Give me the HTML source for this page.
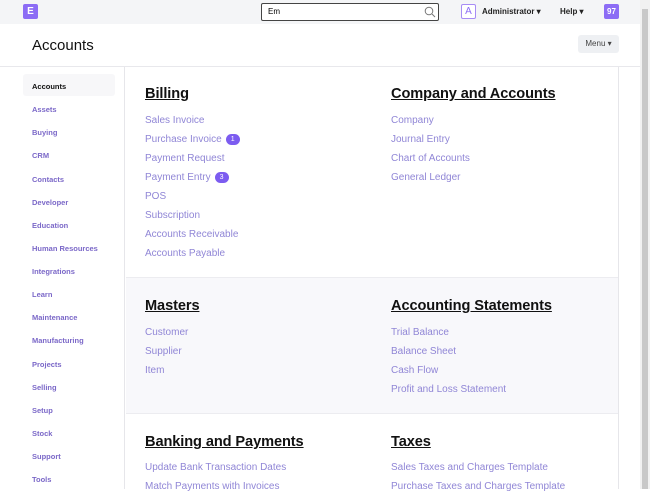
<!DOCTYPE html>
<html><head><style>
*{margin:0;padding:0;box-sizing:border-box}
body{width:650px;height:489px;overflow:hidden;background:#fff;font-family:"Liberation Sans",sans-serif;position:relative}
.top{position:absolute;left:0;top:0;width:640px;height:24px;background:#f4f5f7}
.logo{position:absolute;left:23px;top:4px;width:15px;height:15px;background:#8c6cf5;border-radius:2px;color:#fff;font-size:10px;font-weight:bold;text-align:center;line-height:15px}
.search{position:absolute;left:261px;top:3px;width:178px;height:18px;border:1px solid #444;border-radius:2px;background:#fff;font-size:8px;padding-left:6px;line-height:16px}
.av{position:absolute;left:461px;top:4px;width:15px;height:15px;border:1px solid #a78cf5;border-radius:2px;color:#8c6cf5;font-size:10px;text-align:center;line-height:13px;background:#fff}
.nav{position:absolute;top:7px;font-size:8px;font-weight:bold;color:#222}
.n97{position:absolute;left:604px;top:4px;width:15px;height:15px;background:#8c6cf5;border-radius:2px;color:#fff;font-size:8px;font-weight:bold;text-align:center;line-height:15px}
h1{position:absolute;left:32px;top:37px;font-size:15px;font-weight:normal;color:#111}
.menu{position:absolute;left:578px;top:35px;width:41px;height:18px;background:#eef0f3;border-radius:3px;font-size:8px;color:#444;text-align:center;line-height:18px}
.hl{position:absolute;left:0;top:66px;width:640px;height:1px;background:#e8e8ec}
.side{position:absolute;left:0;top:67px;width:125px;height:422px;border-right:1px solid #e6e6ea}
.si{position:absolute;left:32px;font-size:7.5px;font-weight:bold;color:#7b68c8}
.act{position:absolute;left:23px;top:74px;width:92px;height:22px;background:#f7f7f9;border-radius:3px}
.content{position:absolute;left:126px;top:67px;width:493px;height:422px;border-right:1px solid #e6e6ea}
.sec{position:absolute;left:0;width:492px}
.h{position:absolute;font-size:14.6px;font-weight:bold;color:#111;text-decoration:underline;letter-spacing:-.1px}
.l{position:absolute;font-size:10px;color:#9086d6;white-space:nowrap;margin-top:2px}
.b{display:inline-block;width:14px;height:11px;border-radius:6px;background:#7c5cf0;color:#fff;font-size:7px;text-align:center;line-height:11px;margin-left:4px;vertical-align:1px}
.sb{position:absolute;left:640px;top:0;width:10px;height:489px;background:#f1f1f1}
.th{position:absolute;left:642px;top:9px;width:6px;height:480px;background:#c8c8c8}
</style></head><body>
<div class="top"></div>
<div class="logo">E</div>
<div class="search">Em<svg style="position:absolute;right:2px;top:2px" width="12" height="12" viewBox="0 0 12 12"><circle cx="5" cy="5" r="3.8" fill="none" stroke="#777" stroke-width="1"/><line x1="8" y1="8" x2="11" y2="11" stroke="#777" stroke-width="1"/></svg></div>
<div class="av">A</div>
<div class="nav" style="left:482px">Administrator ▾</div>
<div class="nav" style="left:560px">Help ▾</div>
<div class="n97">97</div>
<h1>Accounts</h1>
<div class="menu">Menu ▾</div>
<div class="hl"></div>
<div class="side"></div>
<div class="act"></div>
<div class="si" style="top:82px;color:#111">Accounts</div>
<div class="si" style="top:105px">Assets</div>
<div class="si" style="top:128px">Buying</div>
<div class="si" style="top:151px">CRM</div>
<div class="si" style="top:175px">Contacts</div>
<div class="si" style="top:198px">Developer</div>
<div class="si" style="top:221px">Education</div>
<div class="si" style="top:244px">Human Resources</div>
<div class="si" style="top:267px">Integrations</div>
<div class="si" style="top:290px">Learn</div>
<div class="si" style="top:313px">Maintenance</div>
<div class="si" style="top:336px">Manufacturing</div>
<div class="si" style="top:360px">Projects</div>
<div class="si" style="top:383px">Selling</div>
<div class="si" style="top:406px">Setup</div>
<div class="si" style="top:429px">Stock</div>
<div class="si" style="top:452px">Support</div>
<div class="si" style="top:475px">Tools</div>
<div class="content">
<div class="sec" style="top:210px;height:137px;background:#f8f8fb;border-top:1px solid #ececf0;border-bottom:1px solid #ececf0"></div>
</div>
<div class="h" style="left:145px;top:86px">Billing</div>
<div class="l" style="left:145px;top:113px">Sales Invoice</div>
<div class="l" style="left:145px;top:132px">Purchase Invoice<span class="b">1</span></div>
<div class="l" style="left:145px;top:151px">Payment Request</div>
<div class="l" style="left:145px;top:170px">Payment Entry<span class="b">3</span></div>
<div class="l" style="left:145px;top:189px">POS</div>
<div class="l" style="left:145px;top:208px">Subscription</div>
<div class="l" style="left:145px;top:227px">Accounts Receivable</div>
<div class="l" style="left:145px;top:246px">Accounts Payable</div>
<div class="h" style="left:391px;top:86px">Company and Accounts</div>
<div class="l" style="left:391px;top:113px">Company</div>
<div class="l" style="left:391px;top:132px">Journal Entry</div>
<div class="l" style="left:391px;top:151px">Chart of Accounts</div>
<div class="l" style="left:391px;top:170px">General Ledger</div>
<div class="h" style="left:145px;top:298px">Masters</div>
<div class="l" style="left:145px;top:325px">Customer</div>
<div class="l" style="left:145px;top:344px">Supplier</div>
<div class="l" style="left:145px;top:363px">Item</div>
<div class="h" style="left:391px;top:298px">Accounting Statements</div>
<div class="l" style="left:391px;top:325px">Trial Balance</div>
<div class="l" style="left:391px;top:344px">Balance Sheet</div>
<div class="l" style="left:391px;top:363px">Cash Flow</div>
<div class="l" style="left:391px;top:382px">Profit and Loss Statement</div>
<div class="h" style="left:145px;top:434px">Banking and Payments</div>
<div class="l" style="left:145px;top:460px">Update Bank Transaction Dates</div>
<div class="l" style="left:145px;top:479px">Match Payments with Invoices</div>
<div class="h" style="left:391px;top:434px">Taxes</div>
<div class="l" style="left:391px;top:460px">Sales Taxes and Charges Template</div>
<div class="l" style="left:391px;top:479px">Purchase Taxes and Charges Template</div>
<div class="sb"></div><div class="th"></div>
</body></html>
